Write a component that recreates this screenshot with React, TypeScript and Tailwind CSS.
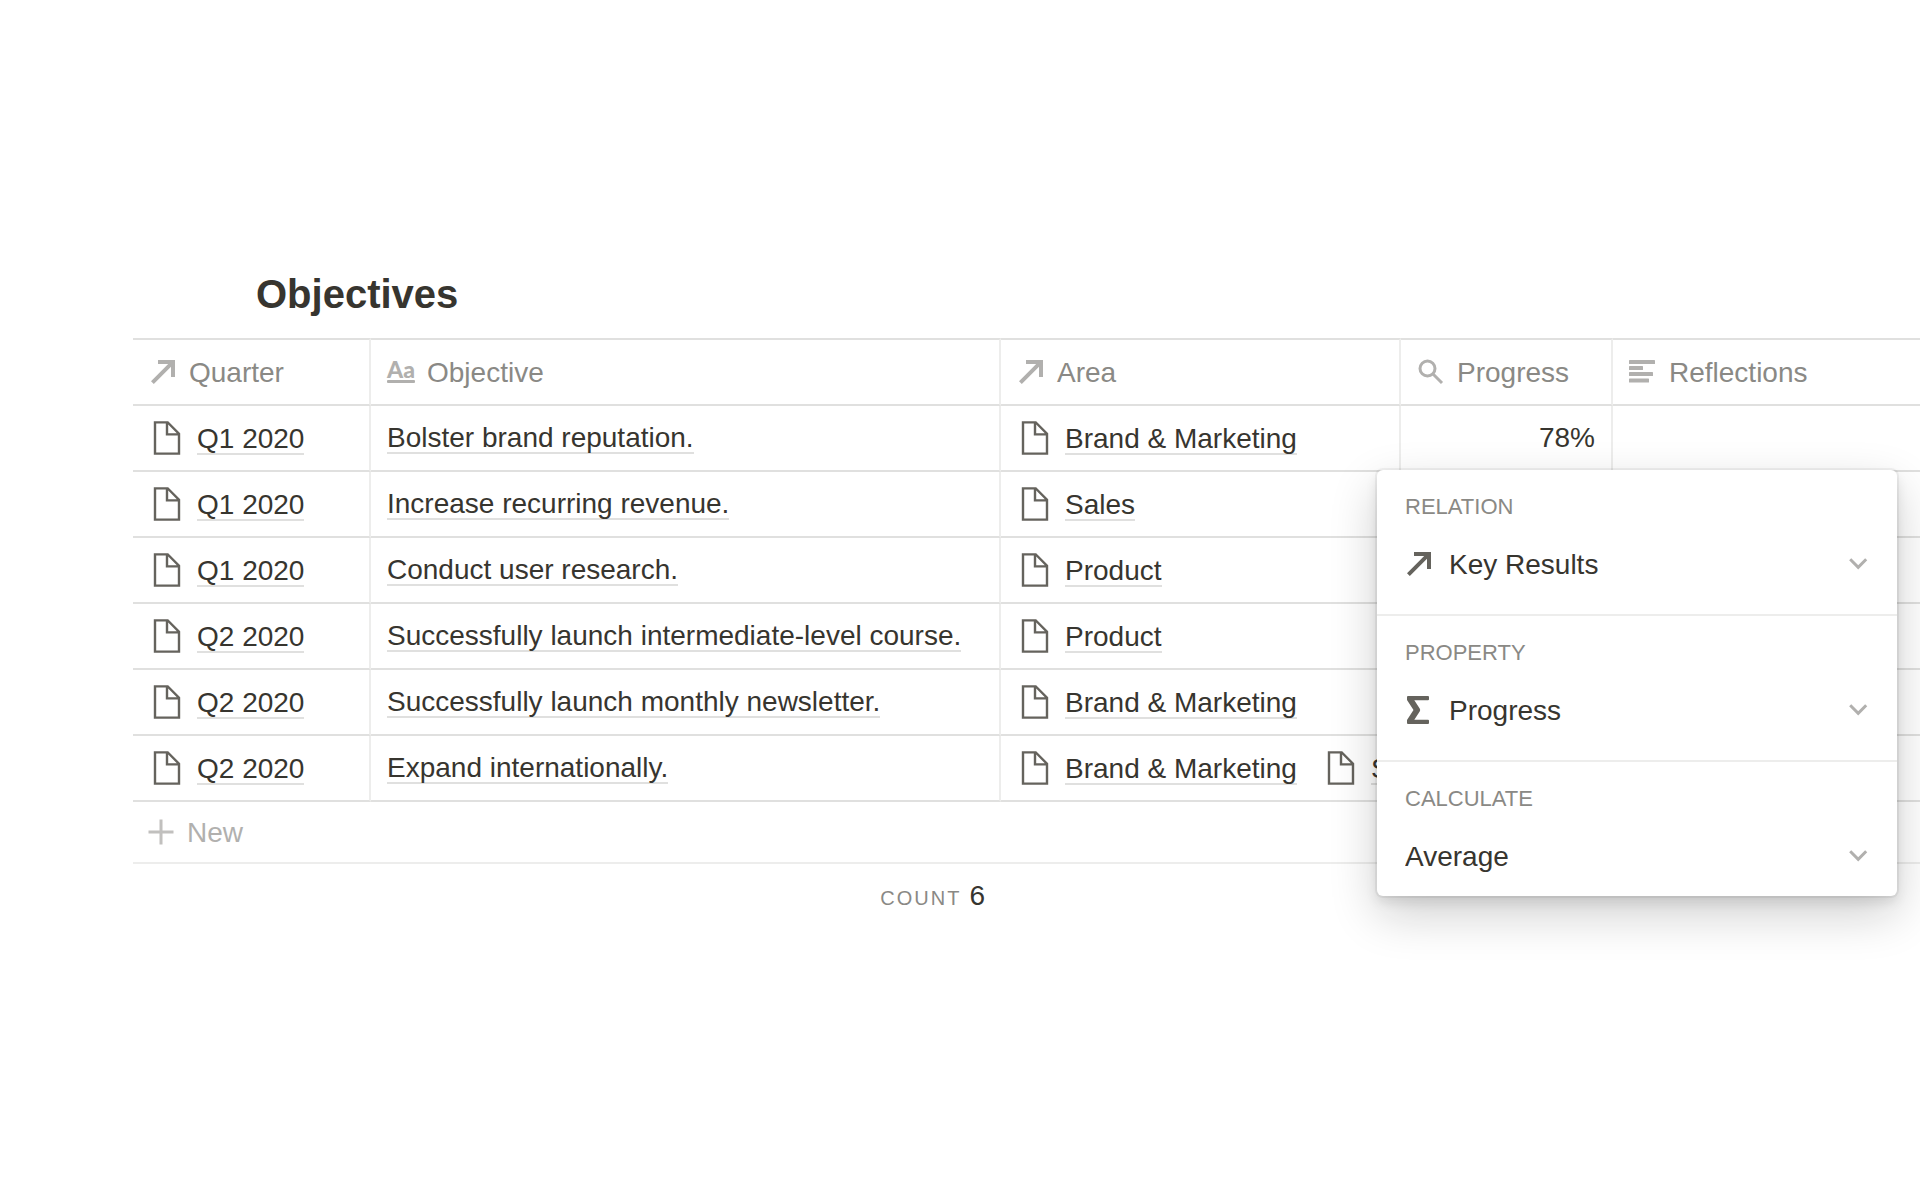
import type { ReactNode } from "react";
import clsx from "clsx";

const OBJECTIVES = [
  { quarter: "Q1 2020", title: "Bolster brand reputation.", areas: ["Brand & Marketing"], progress: "78%" },
  { quarter: "Q1 2020", title: "Increase recurring revenue.", areas: ["Sales"], progress: "" },
  { quarter: "Q1 2020", title: "Conduct user research.", areas: ["Product"], progress: "" },
  { quarter: "Q2 2020", title: "Successfully launch intermediate-level course.", areas: ["Product"], progress: "" },
  { quarter: "Q2 2020", title: "Successfully launch monthly newsletter.", areas: ["Brand & Marketing"], progress: "" },
  { quarter: "Q2 2020", title: "Expand internationally.", areas: ["Brand & Marketing", "Sales"], progress: "" },
];

function RelationIcon() {
  return (
    <svg viewBox="0 0 14 14" className="size-7 shrink-0 fill-current" aria-hidden="true">
      <path d="M4.5 1v2h5.09L1 11.59 2.41 13 11 4.41V9.5h2V1z" />
    </svg>
  );
}

function TitleIcon() {
  return (
    <svg viewBox="0 0 28 28" className="size-7 shrink-0 overflow-visible fill-current" aria-hidden="true">
      <text x="0" y="20" fontFamily="Lato, sans-serif" fontWeight="900" fontSize="23">
        Aa
      </text>
      <rect x="0" y="22" width="28" height="3" rx="1" />
    </svg>
  );
}

function SearchIcon() {
  return (
    <svg viewBox="0 0 28 28" className="size-7 shrink-0" fill="none" stroke="currentColor" strokeWidth="3" aria-hidden="true">
      <circle cx="10.5" cy="10.5" r="7.5" />
      <path d="M16 16l9 9" />
    </svg>
  );
}

function TextIcon() {
  return (
    <svg viewBox="0 0 28 28" className="size-7 shrink-0 fill-current" aria-hidden="true">
      <rect x="0" y="2" width="26" height="4" rx="0.6" />
      <rect x="0" y="8" width="14" height="4" rx="0.6" />
      <rect x="0" y="14" width="24" height="4" rx="0.6" />
      <rect x="0" y="20.5" width="20" height="4" rx="0.6" />
    </svg>
  );
}

function SigmaIcon() {
  return (
    <svg viewBox="0 0 28 28" className="size-7 shrink-0 fill-current" aria-hidden="true">
      <path d="M3 0h20a1 1 0 0 1 1 1v2.300a1 1 0 0 1-1 1H9.300l5.400 8.300a2.400 2.400 0 0 1 0 2.800l-5.400 8.300H23a1 1 0 0 1 1 1V27a1 1 0 0 1-1 1H3a1 1 0 0 1-1-1v-3l6.500-10L2 4V1a1 1 0 0 1 1-1z" />
    </svg>
  );
}

function PageIcon() {
  return (
    <svg viewBox="0 0 30 30" className="size-9 shrink-0 fill-[#65635d]" aria-hidden="true">
      <path d="M16 1H4v28h22V11L16 1zm0 2.828L23.172 11H16V3.828zM24 27H6V3h8v10h10v14z" />
    </svg>
  );
}

function ChevronIcon() {
  return (
    <svg
      viewBox="0 0 20 20"
      className="pointer-events-none absolute top-1/2 right-0 size-5 -translate-y-1/2 text-[#b1b0ae]"
      fill="none"
      stroke="currentColor"
      strokeWidth="3"
      aria-hidden="true"
    >
      <path d="M1.200 5.300l8 8 8-8" />
    </svg>
  );
}

function HeaderCell({ icon, children }: { icon: ReactNode; children: ReactNode }) {
  return (
    <th
      scope="col"
      className="h-[68px] border-y-2 border-r-2 border-y-[#e0e0df] border-r-[#ededec] px-4 py-0 font-normal last:border-r-0"
    >
      <div className="flex items-center gap-3 text-[#b1b0ae]">
        {icon}
        <span className="pt-0.5 text-[#8a8985]">{children}</span>
      </div>
    </th>
  );
}

function Cell({ className, children }: { className?: string; children?: ReactNode }) {
  return (
    <td
      className={clsx(
        "h-[66px] overflow-hidden border-r-2 border-b-2 border-r-[#ededec] border-b-[#e0e0df] px-4 py-0 whitespace-nowrap last:border-r-0",
        className
      )}
    >
      {children}
    </td>
  );
}

function PageLink({ children }: { children: ReactNode }) {
  return (
    <a href="#" className="flex shrink-0 items-center gap-3">
      <PageIcon />
      <span className="border-b-2 border-[#e0e0df] pt-1 leading-7">{children}</span>
    </a>
  );
}

type RollupFieldProps = {
  id: string;
  label: string;
  icon?: ReactNode;
  options: string[];
};

function RollupField({ id, label, icon, options }: RollupFieldProps) {
  return (
    <div className="border-b-2 border-[#ededec] px-7 py-[22px] last:border-b-0 last:pb-3">
      <label htmlFor={id} className="block text-[22px] leading-[30px] text-[#8a8985] uppercase">
        {label}
      </label>
      <div className="relative mt-[14px] flex h-14 items-center gap-4 text-[#65635d]">
        {icon}
        <select id={id} className="h-full min-w-0 flex-1 appearance-none bg-transparent pt-0.5 text-[#37352f] outline-none">
          {options.map((option) => (
            <option key={option}>{option}</option>
          ))}
        </select>
        <ChevronIcon />
      </div>
    </div>
  );
}

export default function App() {
  return (
    <main className="min-h-screen overflow-x-hidden bg-white pt-[268px] pl-[133px] font-['Liberation_Sans',sans-serif] text-[28px] leading-8 text-[#37352f]">
      <h1 className="mb-[18px] pl-[123px] text-[40px] leading-[52px] font-bold">Objectives</h1>

      <div className="relative">
        <table className="w-full table-fixed border-separate border-spacing-0 text-left">
          <colgroup>
            <col className="w-[238px]" />
            <col className="w-[630px]" />
            <col className="w-[400px]" />
            <col className="w-[212px]" />
            <col />
          </colgroup>
          <thead>
            <tr>
              <HeaderCell icon={<RelationIcon />}>Quarter</HeaderCell>
              <HeaderCell icon={<TitleIcon />}>Objective</HeaderCell>
              <HeaderCell icon={<RelationIcon />}>Area</HeaderCell>
              <HeaderCell icon={<SearchIcon />}>Progress</HeaderCell>
              <HeaderCell icon={<TextIcon />}>Reflections</HeaderCell>
            </tr>
          </thead>
          <tbody>
            {OBJECTIVES.map(({ quarter, title, areas, progress }) => (
              <tr key={title}>
                <Cell>
                  <PageLink>{quarter}</PageLink>
                </Cell>
                <Cell>
                  <a href="#" className="inline-block border-b-2 border-[#e0e0df] align-middle leading-7">
                    {title}
                  </a>
                </Cell>
                <Cell>
                  <div className="flex gap-[26px]">
                    {areas.map((area) => (
                      <PageLink key={area}>{area}</PageLink>
                    ))}
                  </div>
                </Cell>
                <Cell className="text-right">{progress}</Cell>
                <Cell />
              </tr>
            ))}
            <tr>
              <td colSpan={5} className="h-[62px] border-b-2 border-[#ededec] px-[14px] py-0">
                <button type="button" className="flex items-center gap-3 text-[#b1b0ae]">
                  <svg viewBox="0 0 28 28" className="size-7" stroke="#c1c0be" strokeWidth="3" aria-hidden="true">
                    <path d="M14 1.500v25M1.500 14h25" />
                  </svg>
                  <span className="pt-0.5">New</span>
                </button>
              </td>
            </tr>
          </tbody>
          <tfoot>
            <tr>
              <td />
              <td className="h-16 px-4 py-0">
                <div className="flex items-baseline justify-end gap-2">
                  <span className="text-xl tracking-[2px] text-[#8a8985] uppercase">Count</span>
                  <span>6</span>
                </div>
              </td>
              <td colSpan={3} />
            </tr>
          </tfoot>
        </table>

        {/* Rollup settings, opened from the first Progress cell */}
        <form className="absolute top-[132px] right-[23px] w-[520px] rounded-md bg-white shadow-[0_0_0_2px_rgba(15,15,15,0.05),0_6px_12px_rgba(15,15,15,0.1),0_18px_48px_rgba(15,15,15,0.2)]">
          <RollupField id="relation" label="Relation" icon={<RelationIcon />} options={["Key Results"]} />
          <RollupField id="property" label="Property" icon={<SigmaIcon />} options={["Progress"]} />
          <RollupField id="calculate" label="Calculate" options={["Average"]} />
        </form>
      </div>
    </main>
  );
}
